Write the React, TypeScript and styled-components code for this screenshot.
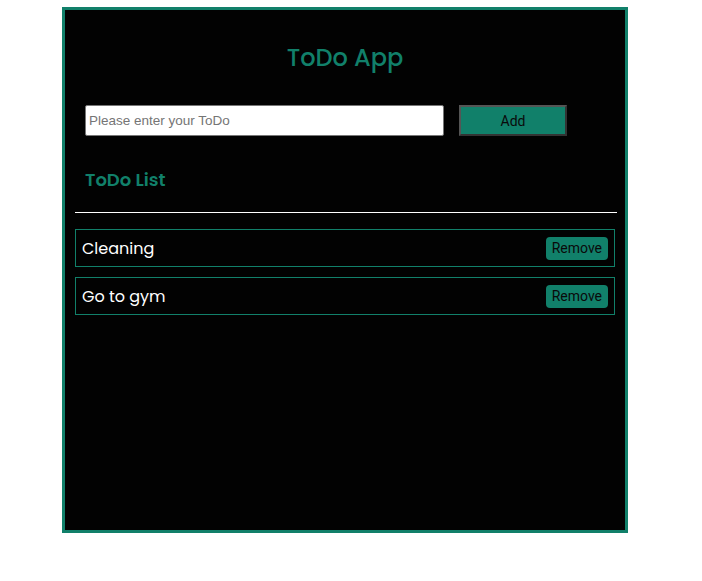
import React, { useState } from "react";
import styled, { createGlobalStyle } from "styled-components";

const TEAL = "#11806a";

const GlobalStyle = createGlobalStyle`
  body {
    margin: 0;
    background: #ffffff;
    font-family: "Liberation Sans", Arial, sans-serif;
  }
`;

const Page = styled.div`
  padding: 7px 0 0 62px;
`;

const Card = styled.div`
  box-sizing: border-box;
  width: 566px;
  height: 526px;
  background: #020202;
  border: 3px solid ${TEAL};
  padding: 0 10px;
`;

const Title = styled.h1`
  margin: 0;
  padding-top: 31px;
  height: 50px;
  text-align: center;
  color: ${TEAL};
  font-family: Poppins, "Open Sans", sans-serif;
  font-size: 24px;
  font-weight: 500;
  line-height: 34px;
`;

const InputRow = styled.div`
  display: flex;
  align-items: center;
  gap: 15px;
  margin-top: 14px;
  padding-left: 10px;
`;

const TodoInput = styled.input`
  box-sizing: border-box;
  width: 359px;
  height: 31px;
  padding: 0 3px;
  border: 1px solid #767676;
  border-radius: 2px;
  font-family: "Liberation Sans", Arial, sans-serif;
  font-size: 13.5px;
  color: #222;
  &::placeholder {
    color: #757575;
  }
`;

const AddButton = styled.button`
  box-sizing: border-box;
  width: 108px;
  height: 31px;
  background: ${TEAL};
  border: 2px solid #555;
  border-right-color: #333;
  border-bottom-color: #333;
  color: #0a0a0a;
  font-family: Roboto, "Liberation Sans", sans-serif;
  font-size: 14px;
`;

const ListHeading = styled.h2`
  margin: 0;
  padding: 29px 0 0 10px;
  height: 30px;
  color: ${TEAL};
  font-family: Poppins, "Open Sans", sans-serif;
  font-size: 18px;
  font-weight: 600;
  line-height: 30px;
`;

const Divider = styled.hr`
  margin: 17px 0 0;
  width: 542px;
  border: 0;
  border-top: 1px solid #ffffff;
  height: 0;
`;

const List = styled.ul`
  list-style: none;
  margin: 16px 0 0;
  padding: 0;
  display: flex;
  flex-direction: column;
  gap: 10px;
  width: 540px;
`;

const Item = styled.li`
  box-sizing: border-box;
  height: 38px;
  display: flex;
  align-items: center;
  justify-content: space-between;
  padding: 0 6px;
  border: 1px solid ${TEAL};
`;

const ItemText = styled.span`
  color: #ffffff;
  font-family: Poppins, "Open Sans", sans-serif;
  font-size: 16px;
  font-weight: 400;
`;

const RemoveButton = styled.button`
  height: 23px;
  padding: 0 6px;
  background: ${TEAL};
  border: 0;
  border-radius: 4px;
  color: #0a0a0a;
  font-family: Roboto, "Liberation Sans", sans-serif;
  font-size: 14px;
`;

export default function App() {
  const [todos, setTodos] = useState<string[]>(["Cleaning", "Go to gym"]);
  const [text, setText] = useState("");

  const add = () => {
    if (!text.trim()) return;
    setTodos([...todos, text.trim()]);
    setText("");
  };

  return (
    <Page>
      <GlobalStyle />
      <Card>
        <Title>ToDo App</Title>
        <InputRow>
          <TodoInput
            placeholder="Please enter your ToDo"
            value={text}
            onChange={(e) => setText(e.target.value)}
          />
          <AddButton onClick={add}>Add</AddButton>
        </InputRow>
        <ListHeading>ToDo List</ListHeading>
        <Divider />
        <List>
          {todos.map((t, i) => (
            <Item key={i}>
              <ItemText>{t}</ItemText>
              <RemoveButton
                onClick={() => setTodos(todos.filter((_, j) => j !== i))}
              >
                Remove
              </RemoveButton>
            </Item>
          ))}
        </List>
      </Card>
    </Page>
  );
}
